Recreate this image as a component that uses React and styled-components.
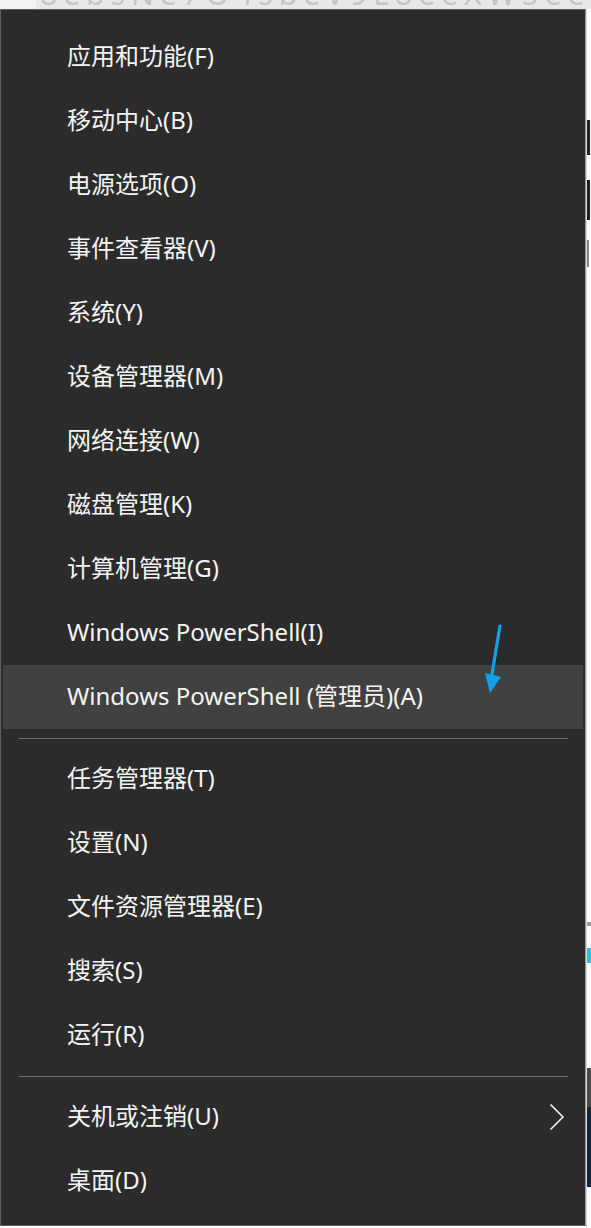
import React from 'react';
import styled, { createGlobalStyle } from 'styled-components';

const GlobalStyle = createGlobalStyle`
  html, body {
    margin: 0;
    padding: 0;
    background: #ffffff;
  }
  body {
    font-family: "Noto Sans", "Noto Sans CJK SC", sans-serif;
  }
`;

const Page = styled.div`
  width: 591px;
  height: 1228px;
  display: flex;
  flex-direction: column;
  overflow: hidden;
  background: #ffffff;
`;

const TopStrip = styled.div`
  height: 9px;
  flex-shrink: 0;
  overflow: hidden;
  background: linear-gradient(to right, #f3f3f3 0 36px, #e8e8e8 36px);
  color: #c4c4c4;
  font-size: 30px;
  line-height: 30px;
  white-space: nowrap;
  letter-spacing: 6px;
`;

const TopText = styled.div`
  margin-top: -21px;
  padding-left: 40px;
`;

const Body = styled.div`
  flex: 1;
  display: flex;
`;

const Menu = styled.div`
  width: 586px;
  height: 1217px;
  box-sizing: border-box;
  background: #2b2b2b;
  border: 1px solid #5f5f5f;
  border-right-color: #9a9a9a;
  padding: 15px 1px 12px;
  display: flex;
  flex-direction: column;
  flex-shrink: 0;
`;

const Item = styled.div`
  position: relative;
  height: 64px;
  margin: 0 1px;
  display: flex;
  align-items: center;
  justify-content: space-between;
  padding: 0 18px 0 64px;
  background: ${p => (p.active ? '#414141' : 'transparent')};
  color: #f4f4f4;
  font-size: 24px;
  line-height: 30px;
  white-space: nowrap;

  & > span {
    margin-top: -3px;
  }
`;

const Separator = styled.div`
  height: 18px;
  display: flex;
  align-items: center;
  padding: 0 16px 0 17px;

  &::before {
    content: '';
    flex: 1;
    height: 1px;
    background: #6f6f6f;
  }
`;

const Annotation = styled.svg`
  position: absolute;
  left: 479px;
  top: -42px;
  pointer-events: none;
`;

const Side = styled.div`
  flex: 1;
  display: flex;
  flex-direction: column;
  background: #ffffff;
  border-left: 1px solid #d8d8d8;
`;

const Glyph = styled.div`
  height: ${p => p.h}px;
  margin-top: ${p => p.gap}px;
  width: ${p => p.w || 3}px;
  background: ${p => p.color || '#222'};
`;

const Chevron = () => (
  <svg width="16" height="28" viewBox="0 0 16 28">
    <path d="M1.5 1.5 L14 14 L1.5 26.5" fill="none" stroke="#f2f2f2" strokeWidth="1.6" />
  </svg>
);

const BlueArrow = () => (
  <Annotation width="24" height="72" viewBox="0 0 24 72">
    <path d="M18 3 L9.5 54" stroke="#149fe6" strokeWidth="3.2" strokeLinecap="round" fill="none" />
    <path d="M3 50 L19 54 L8 70 Z" fill="#149fe6" />
  </Annotation>
);

const groups = [
  [
    '应用和功能(F)',
    '移动中心(B)',
    '电源选项(O)',
    '事件查看器(V)',
    '系统(Y)',
    '设备管理器(M)',
    '网络连接(W)',
    '磁盘管理(K)',
    '计算机管理(G)',
    'Windows PowerShell(I)',
    'Windows PowerShell (管理员)(A)',
  ],
  ['任务管理器(T)', '设置(N)', '文件资源管理器(E)', '搜索(S)', '运行(R)'],
  ['关机或注销(U)', '桌面(D)'],
];

export default function App() {
  return (
    <>
      <GlobalStyle />
      <Page>
        <TopStrip>
          <TopText>8ebsNe7O4sbeV9L8eeXW5eeQV07Y</TopText>
        </TopStrip>
        <Body>
          <Menu>
            {groups.map((group, gi) => (
              <React.Fragment key={gi}>
                {gi > 0 && <Separator />}
                {group.map(label => {
                  const active = label.includes('(A)');
                  return (
                    <Item key={label} active={active}>
                      <span>{label}</span>
                      {label === '关机或注销(U)' && <Chevron />}
                      {active && <BlueArrow />}
                    </Item>
                  );
                })}
              </React.Fragment>
            ))}
          </Menu>
          <Side>
            <Glyph gap={111} h={35} />
            <Glyph gap={25} h={40} />
            <Glyph gap={20} h={27} color="#888" w={2} />
            <Glyph gap={655} h={4} color="#999" w={4} />
            <Glyph gap={22} h={15} color="#21c4d8" w={4} />
            <Glyph gap={105} h={39} color="#4a4a4a" w={4} />
            <Glyph gap={0} h={80} color="#11243a" w={5} />
          </Side>
        </Body>
      </Page>
    </>
  );
}
